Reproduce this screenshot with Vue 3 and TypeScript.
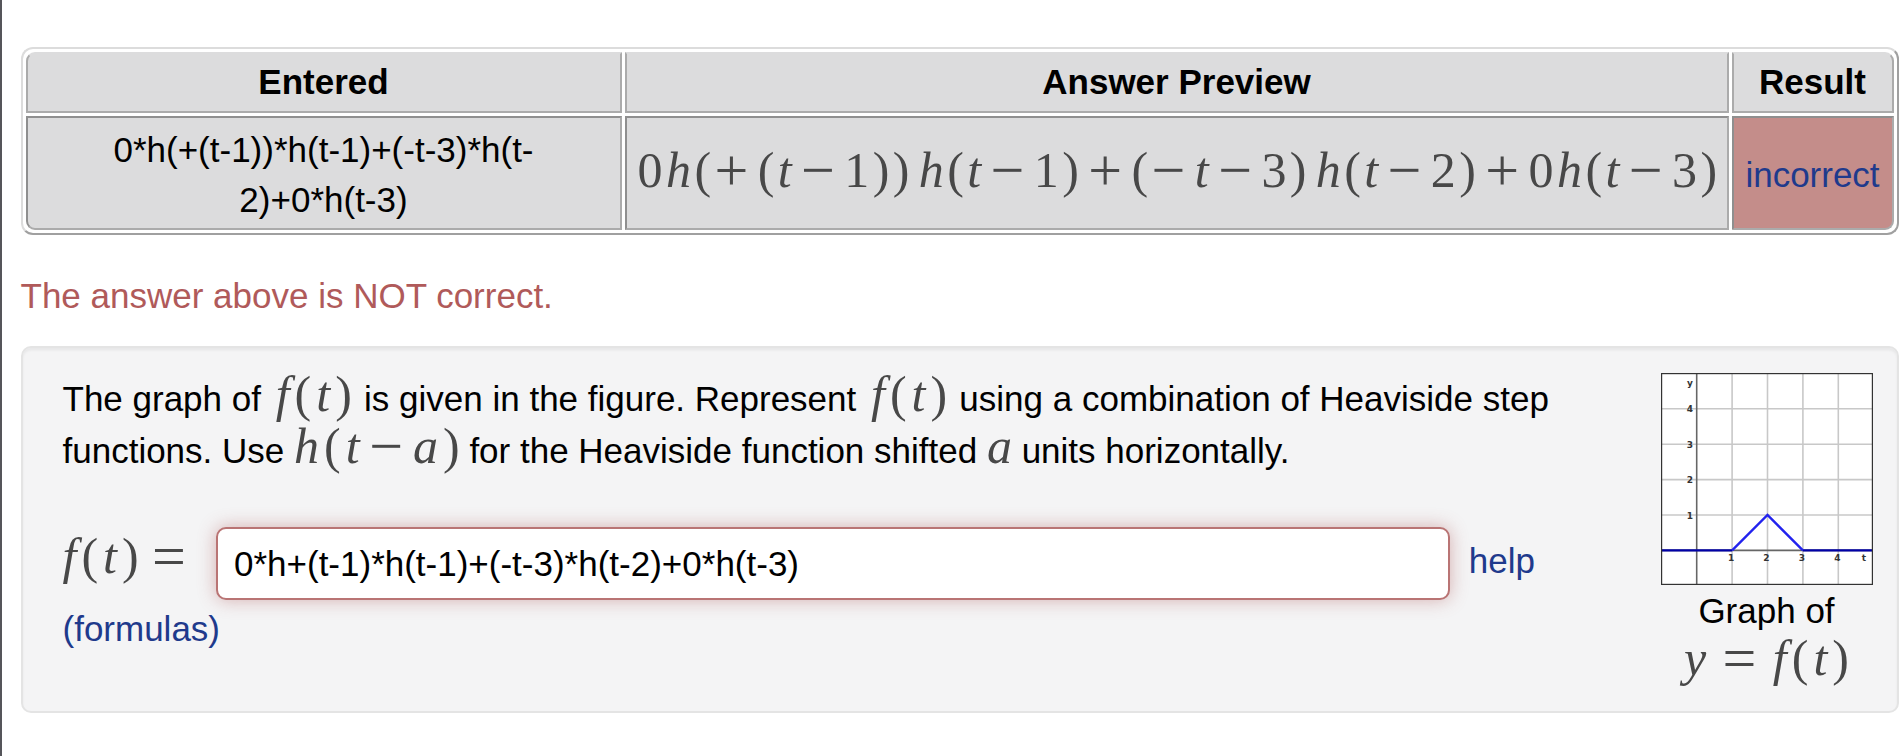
<script setup lang="ts">
const ticks = [1, 2, 3, 4];
const unit = 35.4;
const ox = 35.7;
const oy = 177.4;
const gridX = [1, 2, 3, 4].map((n) => ox + n * unit);
const gridY = [1, 2, 3, 4].map((n) => oy - n * unit);
</script>

<template>
  <div class="page">
    <table class="results">
      <colgroup>
        <col class="c1" />
        <col class="c2" />
        <col class="c3" />
      </colgroup>
      <thead>
        <tr>
          <th class="first">Entered</th>
          <th>Answer Preview</th>
          <th class="last">Result</th>
        </tr>
      </thead>
      <tbody>
        <tr>
          <td class="first">0*h(+(t-1))*h(t-1)+(-t-3)*h(t-<br />2)+0*h(t-3)</td>
          <td class="preview">
            <span class="m">0<i>h</i>(<span class="op unary">+</span>(<i>t</i><span class="op">−</span>1))<span class="thin"></span><i>h</i>(<i>t</i><span class="op">−</span>1)<span class="op">+</span>(<span class="op unary">−</span><i>t</i><span class="op">−</span>3)<span class="thin"></span><i>h</i>(<i>t</i><span class="op">−</span>2)<span class="op">+</span>0<i>h</i>(<i>t</i><span class="op">−</span>3)</span>
          </td>
          <td class="last bad"><a class="link">incorrect</a></td>
        </tr>
      </tbody>
    </table>

    <p class="verdict">The answer above is NOT correct.</p>

    <div class="well">
      <div class="problem">
        <p class="statement">
          The graph of <span class="m fn"><i>f</i>(<i>t</i>)</span> is given in the figure. Represent
          <span class="m fn"><i>f</i>(<i>t</i>)</span> using a combination of Heaviside step<br />
          functions. Use
          <span class="m"><i>h</i>(<i>t</i><span class="op">−</span><i>a</i>)</span> for the Heaviside function shifted
          <span class="m"><i>a</i></span> units horizontally.
        </p>
        <div class="answer">
          <span class="m lead"><i>f</i>(<i>t</i>)<span class="op rel">=</span></span>{{ ' ' }}<input class="entry" type="text" readonly value="0*h+(t-1)*h(t-1)+(-t-3)*h(t-2)+0*h(t-3)" />{{ ' ' }}<a class="link">help</a>{{ ' ' }}<a class="link">(formulas)</a>
        </div>
      </div>
      <figure class="figure">
        <svg class="graph" viewBox="0 0 212 212" width="212" height="212">
          <rect x="0" y="0" width="212" height="212" fill="#fff" />
          <line v-for="x in gridX" :key="'x' + x" :x1="x" :x2="x" y1="0" y2="212" class="grid" />
          <line v-for="y in gridY" :key="'y' + y" :y1="y" :y2="y" x1="0" x2="212" class="grid" />
          <line :x1="ox" :x2="ox" y1="0" y2="212" class="axis" />
          <line :y1="oy" :y2="oy" x1="0" x2="212" class="axis" />
          <polyline :points="`0,${oy} ${gridX[0]},${oy}`" class="flat" />
          <polyline :points="`${gridX[2]},${oy} 212,${oy}`" class="flat" />
          <polyline :points="`${gridX[0]},${oy} ${gridX[1]},${gridY[0]} ${gridX[2]},${oy}`" class="peak" />
          <text v-for="(n, i) in ticks" :key="'tx' + n" :x="gridX[i] - 1" :y="oy + 11" class="tick">{{ n }}</text>
          <text :x="203" :y="oy + 11" class="tick">t</text>
          <text v-for="(n, i) in ticks" :key="'ty' + n" x="29" :y="gridY[i] + 3.5" class="tick">{{ n }}</text>
          <text x="29" y="13" class="tick">y</text>
          <rect x="0.6" y="0.6" width="210.8" height="210.8" fill="none" stroke="#333" stroke-width="1.2" />
        </svg>
        <figcaption class="caption">
          Graph of<br />
          <span class="m"><i>y</i><span class="op rel">=</span><i>f</i>(<i>t</i>)</span>
        </figcaption>
      </figure>
    </div>
  </div>
</template>

<style scoped>
.page {
  box-sizing: border-box;
  height: 756px;
  overflow: hidden;
  border-left: 2.5px solid #55555a;
  padding: 47px 0 0 18.5px;
  font-family: "Liberation Sans", Arial, sans-serif;
  font-size: 35px;
  line-height: 50px;
  color: #000;
  background: #fff;
}
.results {
  box-sizing: border-box;
  width: 1878px;
  table-layout: fixed;
  border-collapse: separate;
  border-spacing: 3px;
  border-width: 2.5px 2px 2.5px 2px;
  border-style: solid;
  border-color: #dcdcdc #a0a0a0 #a0a0a0 #dcdcdc;
  border-radius: 12px;
}
.c1 { width: 596px; }
.c2 { width: 1104px; }
.c3 { width: 162px; }
th,
td {
  box-sizing: border-box;
  background: #dcdcdd;
  text-align: center;
  border-style: solid;
  border-width: 2.5px;
  font-weight: normal;
}
th {
  height: 61px;
  padding: 0 0 2px;
  font-weight: bold;
  border-color: #dcdcdd #ababab #ababab #ababab;
}
td {
  height: 114px;
  padding: 5px 0 2px;
  border-color: #8f8f8f #ababab #ababab #8f8f8f;
}
th.first { border-top-left-radius: 9px; }
th.last { border-top-right-radius: 9px; }
td.first { border-bottom-left-radius: 9px; }
td.last { border-bottom-right-radius: 9px; }
td.bad { background: #c48d8a; }
.link { color: #1f3a8c; }
.m {
  font-family: "Liberation Serif", serif;
  font-size: 50px;
  line-height: 0;
  letter-spacing: 0.1em;
  margin-right: -0.1em;
  color: #484848;
  white-space: nowrap;
}
.m i { font-style: italic; }
.fn { margin-left: 0.1em; margin-right: -0.05em; }
.preview .m { letter-spacing: 0.068em; }
.op {
  font-size: 1.2em;
  line-height: 0;
  vertical-align: -3px;
  margin: 0 0.08em;
}
.preview .op { margin: 0 0.1em; }
.preview .unary { margin-left: 0; }
.unary { margin-left: 0; }
.rel { margin: 0 0.14em; }
.caption .rel { margin: 0 0.19em; }
.thin { margin-left: 0.12em; }
.verdict {
  margin: 0;
  padding-top: 35.5px;
  height: 111px;
  box-sizing: border-box;
  color: #b05a5a;
}
.well {
  box-sizing: border-box;
  display: flex;
  width: 1878px;
  padding: 25px 24px 22px 40px;
  background: #f4f4f5;
  border: 2.5px solid #e4e4e4;
  border-radius: 10px;
  box-shadow: inset 0 2.5px 2.5px rgba(0, 0, 0, 0.05);
}
.problem { flex: 1; min-width: 0; }
.statement {
  margin: 0 0 50px;
  line-height: 52px;
  width: 1500px;
}
.answer { line-height: 57px; }
.lead { margin-right: 7px; }
.entry {
  box-sizing: border-box;
  width: 1234px;
  height: 73px;
  padding: 0 16px;
  margin: 0 9px 0 0;
  vertical-align: middle;
  font-family: inherit;
  font-size: 35px;
  color: #000;
  background: #fff;
  border: 2.5px solid #b97474;
  border-radius: 10px;
  outline: none;
  box-shadow: 0 0 18px rgba(176, 90, 90, 0.45);
}
.figure {
  margin: 0;
  width: 212px;
  text-align: center;
  flex: none;
}
.graph { display: block; }
.caption { line-height: 52px; }
.grid { stroke: #c8c8c8; stroke-width: 1.6; }
.axis { stroke: #666; stroke-width: 1.6; }
.flat { fill: none; stroke: #0000a6; stroke-width: 2.4; }
.peak { fill: none; stroke: #2222ee; stroke-width: 2.4; }
.tick {
  font-family: "DejaVu Sans", sans-serif;
  font-size: 9px;
  font-weight: bold;
  text-anchor: middle;
  fill: #333;
}
</style>

<style>
html, body { margin: 0; background: #fff; }
</style>
